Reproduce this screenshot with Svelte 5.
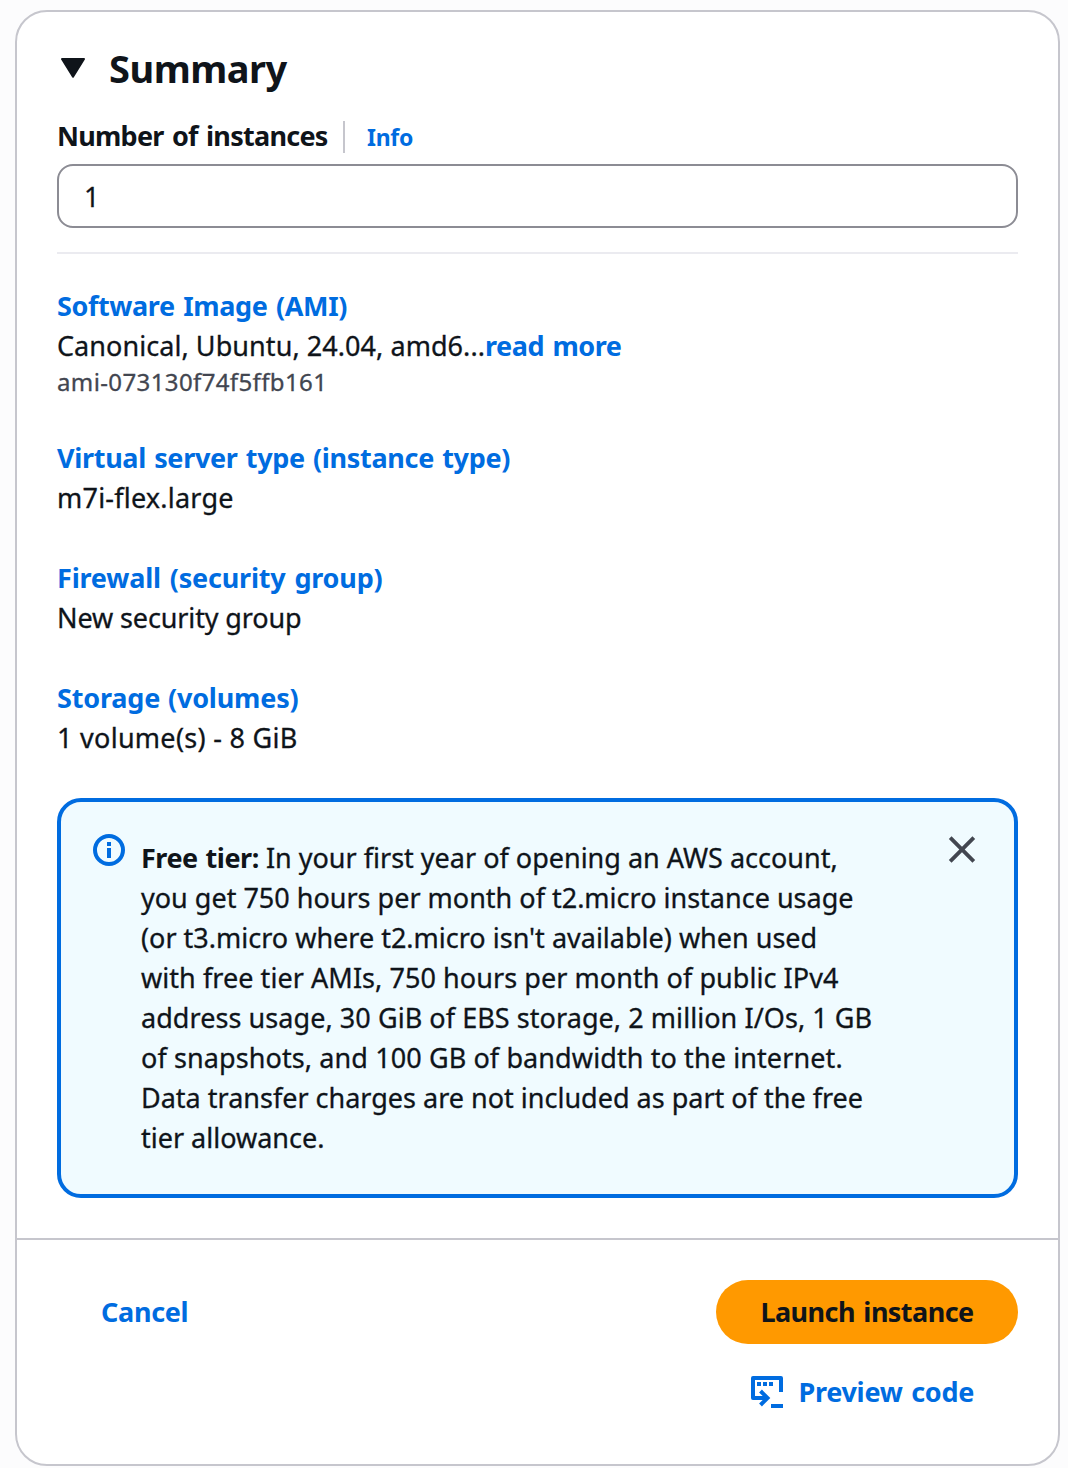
<script>
  let instances = $state('1');
  let open = $state(true);
  let showAlert = $state(true);
</script>

<section class="card">
  <div class="body">
    <button class="heading" aria-expanded={open} onclick={() => (open = !open)}>
      <svg class="caret" viewBox="0 0 24 20" aria-hidden="true">
        <path d="M1 1h22L12 18.6z" fill="currentColor" stroke="currentColor" stroke-width="2" stroke-linejoin="round" />
      </svg>
      <span class="title">Summary</span>
    </button>

    {#if open}
      <div class="label-row">
        <label class="label" for="count">Number of instances</label>
        <span class="rule"></span>
        <a class="info" href="#info">Info</a>
      </div>
      <input id="count" class="field" bind:value={instances} />
      <div class="divider"></div>

      <div class="details">
        <div>
          <a class="link image" href="#ami">Software Image (AMI)</a>
          <div class="value"><span class="name">Canonical, Ubuntu, 24.04, amd6...</span><a class="more" href="#more">read more</a></div>
          <div class="sub">ami-073130f74f5ffb161</div>
        </div>
        <div>
          <a class="link server" href="#type">Virtual server type (instance type)</a>
          <div class="value type">m7i-flex.large</div>
        </div>
        <div>
          <a class="link firewall" href="#firewall">Firewall (security group)</a>
          <div class="value group">New security group</div>
        </div>
        <div>
          <a class="link storage" href="#storage">Storage (volumes)</a>
          <div class="value volume">1 volume(s) - 8 GiB</div>
        </div>
      </div>

      {#if showAlert}
        <div class="alert">
          <svg class="info-icon" viewBox="0 0 32 32" aria-hidden="true">
            <circle cx="16" cy="16" r="14" fill="none" stroke="currentColor" stroke-width="4" />
            <path d="M14 8h4v4h-4zM14 14h4v10h-4z" fill="currentColor" />
          </svg>
          <p class="message">
            <strong>Free tier:</strong> In your first year of opening an AWS account,<br />
            you get 750 hours per month of t2.micro instance usage<br />
            (or t3.micro where t2.micro isn't available) when used<br />
            <span class="wide">with free tier AMIs, 750 hours per month of public IPv4</span><br />
            <span class="wide">address usage, 30 GiB of EBS storage, 2 million I/Os, 1 GB</span><br />
            <span class="wider">of snapshots, and 100 GB of bandwidth to the internet.</span><br />
            Data transfer charges are not included as part of the free<br />
            tier allowance.
          </p>
          <button class="close" aria-label="Dismiss" onclick={() => (showAlert = false)}>
            <svg viewBox="0 0 32 32" aria-hidden="true">
              <path d="M4.2 3.7l23.6 23.6M27.8 3.7L4.2 27.3" fill="none" stroke="currentColor" stroke-width="3.8" />
            </svg>
          </button>
        </div>
      {/if}
    {/if}
  </div>

  <footer class="footer">
    <button class="cancel">Cancel</button>
    <div class="actions">
      <button class="launch">Launch instance</button>
      <button class="preview">
        <svg viewBox="0 0 32 32" aria-hidden="true">
          <path d="M30 16V2H2v20h15" fill="none" stroke="currentColor" stroke-width="4" stroke-linejoin="round" />
          <path d="M9.5 15l7 7-7 7" fill="none" stroke="currentColor" stroke-width="4" />
          <path d="M6 6h4v4H6zM12 6h4v4h-4zM18 6h4v4h-4zM20 28h12v4H20z" fill="currentColor" />
        </svg>
        <span>Preview code</span>
      </button>
    </div>
  </footer>
</section>

<style>
  :global(html) {
    overflow: hidden;
  }
  :global(body) {
    background: #fcfcfd;
  }
  :global(#app) {
    display: flow-root;
  }
  .card {
    box-sizing: border-box;
    width: 1045px;
    height: 1456px;
    margin: 10px 0 0 15px;
    border: 2px solid #c6c6cd;
    border-radius: 32px;
    background: #fff;
    color: #0f141a;
    font: 400 27px/40px 'Noto Sans', sans-serif;
    display: flex;
    flex-direction: column;
  }
  button {
    padding: 0;
    border: 0;
    background: none;
    font: inherit;
    color: inherit;
    cursor: pointer;
    white-space: nowrap;
  }
  a {
    color: #006ce0;
    text-decoration: none;
    font-weight: 700;
    -webkit-text-stroke: 0;
  }
  .body {
    padding: 32px 40px 40px;
    flex: 1;
  }
  .heading {
    display: flex;
    align-items: center;
    gap: 24px;
    height: 48px;
    padding-left: 4px;
    margin-bottom: 24px;
  }
  .caret {
    width: 24px;
    height: 20px;
  }
  .title {
    font-size: 38px;
    line-height: 48px;
    font-weight: 700;
    letter-spacing: -0.5px;
  }
  .label-row {
    display: flex;
    align-items: baseline;
    height: 40px;
    margin: 0 0 8px;
  }
  .label {
    font-weight: 700;
    letter-spacing: -0.74px;
    word-spacing: 2px;
    width: 270px;
    white-space: nowrap;
  }
  .rule {
    width: 2px;
    height: 32px;
    align-self: flex-start;
    margin: 5px 22px 0 16px;
    background: #c6c6cd;
  }
  .info {
    font-size: 23px;
    letter-spacing: -0.3px;
  }
  .field {
    box-sizing: border-box;
    display: block;
    width: 100%;
    height: 64px;
    padding: 0 25px;
    border: 2px solid #8c8c94;
    border-radius: 16px;
    background: #fff;
    color: inherit;
    font: inherit;
    outline: none;
    -webkit-text-stroke: 0.3px;
  }
  .divider {
    height: 2px;
    margin: 24px 0 32px;
    background: #ebebf0;
  }
  .details {
    display: flex;
    flex-direction: column;
    gap: 40px;
    margin-bottom: 40px;
    white-space: nowrap;
  }
  .value,
  .sub,
  .message {
    -webkit-text-stroke: 0.3px;
  }
  .link {
    display: block;
  }
  .image {
    letter-spacing: -0.4px;
    word-spacing: 2px;
  }
  .server {
    letter-spacing: -0.32px;
    word-spacing: 1.5px;
  }
  .firewall {
    letter-spacing: -0.19px;
    word-spacing: 2px;
  }
  .storage {
    letter-spacing: -0.18px;
    word-spacing: 1px;
  }
  .name {
    letter-spacing: 0.06px;
  }
  .more {
    letter-spacing: -0.48px;
    word-spacing: 2px;
  }
  .sub {
    font-size: 24px;
    line-height: 32px;
    letter-spacing: 0.38px;
    color: #424650;
  }
  .type {
    letter-spacing: 0.22px;
  }
  .group {
    letter-spacing: -0.12px;
  }
  .volume {
    letter-spacing: 0.28px;
  }
  .alert {
    box-sizing: border-box;
    display: flex;
    align-items: flex-start;
    height: 400px;
    padding: 32px;
    border: 4px solid #006ce0;
    border-radius: 24px;
    background: #f0fbff;
  }
  .info-icon {
    width: 32px;
    height: 32px;
    flex: none;
    color: #006ce0;
  }
  .message {
    flex: 1;
    margin: 4px 0 0 16px;
    white-space: nowrap;
  }
  strong {
    letter-spacing: -0.45px;
    word-spacing: 1.2px;
    -webkit-text-stroke: 0;
  }
  .wide {
    letter-spacing: 0.06px;
  }
  .wider {
    letter-spacing: 0.1px;
  }
  .close {
    height: 32px;
    margin-right: 4px;
    color: #424650;
  }
  .close svg,
  .preview svg {
    display: block;
    width: 32px;
    height: 32px;
  }
  .footer {
    display: flex;
    justify-content: space-between;
    align-items: flex-start;
    padding: 40px 40px 40px 84px;
    border-top: 2px solid #c6c6cd;
  }
  .footer button {
    height: 64px;
    font-weight: 700;
  }
  .footer .cancel {
    color: #006ce0;
    letter-spacing: -0.3px;
  }
  .actions {
    display: flex;
    flex-direction: column;
    align-items: flex-end;
    gap: 16px;
  }
  .footer .launch {
    width: 302px;
    border-radius: 32px;
    background: #ff9900;
    letter-spacing: -0.56px;
    word-spacing: 2px;
  }
  .footer .preview {
    display: flex;
    align-items: center;
    gap: 16px;
    padding-right: 44px;
    color: #006ce0;
    letter-spacing: -0.3px;
    word-spacing: 2px;
  }
</style>
